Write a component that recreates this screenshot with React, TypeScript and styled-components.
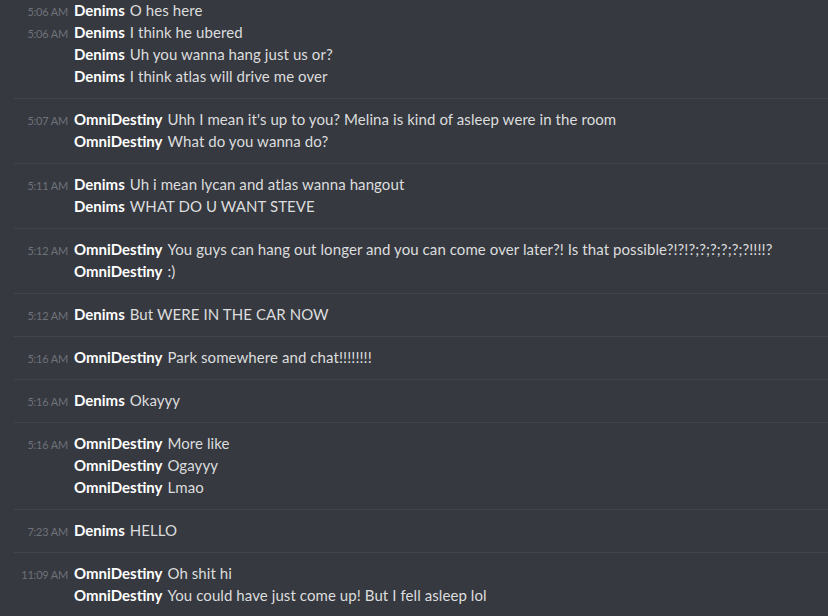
import React from "react";
import styled, { createGlobalStyle } from "styled-components";

const GlobalStyle = createGlobalStyle`
  html, body {
    margin: 0;
    padding: 0;
    background: #36393f;
    overflow: hidden;
  }
`;

type Line = { time?: string; author: string; text: string };

const groups: Line[][] = [
  [
    { time: "5:06 AM", author: "Denims", text: "O hes here" },
    { time: "5:06 AM", author: "Denims", text: "I think he ubered" },
    { author: "Denims", text: "Uh you wanna hang just us or?" },
    { author: "Denims", text: "I think atlas will drive me over" },
  ],
  [
    {
      time: "5:07 AM",
      author: "OmniDestiny",
      text: "Uhh I mean it's up to you? Melina is kind of asleep were in the room",
    },
    { author: "OmniDestiny", text: "What do you wanna do?" },
  ],
  [
    { time: "5:11 AM", author: "Denims", text: "Uh i mean lycan and atlas wanna hangout" },
    { author: "Denims", text: "WHAT DO U WANT STEVE" },
  ],
  [
    {
      time: "5:12 AM",
      author: "OmniDestiny",
      text: "You guys can hang out longer and you can come over later?! Is that possible?!?!?;?;?;?;?;?!!!!?",
    },
    { author: "OmniDestiny", text: ":)" },
  ],
  [{ time: "5:12 AM", author: "Denims", text: "But WERE IN THE CAR NOW" }],
  [{ time: "5:16 AM", author: "OmniDestiny", text: "Park somewhere and chat!!!!!!!!" }],
  [{ time: "5:16 AM", author: "Denims", text: "Okayyy" }],
  [
    { time: "5:16 AM", author: "OmniDestiny", text: "More like" },
    { author: "OmniDestiny", text: "Ogayyy" },
    { author: "OmniDestiny", text: "Lmao" },
  ],
  [{ time: "7:23 AM", author: "Denims", text: "HELLO" }],
  [
    { time: "11:09 AM", author: "OmniDestiny", text: "Oh shit hi" },
    { author: "OmniDestiny", text: "You could have just come up! But I fell asleep lol" },
  ],
];

export default function App() {
  return (
    <>
      <GlobalStyle />
      <Chat>
        {groups.map((group, gi) => (
          <Group key={gi}>
            {group.map((line, li) => (
              <Row key={li}>
                <Time>{line.time ?? ""}</Time>
                <Author>{line.author}</Author>
                <Text>{line.text}</Text>
              </Row>
            ))}
          </Group>
        ))}
      </Chat>
    </>
  );
}

const Chat = styled.div`
  display: flex;
  flex-direction: column;
  height: 616px;
  overflow: hidden;
  margin-top: -10px;
  padding-left: 14px;
  font-family: Lato, "Open Sans", sans-serif;
`;

const Group = styled.div`
  padding: 10px 0;
  border-bottom: 1px solid #42454c;
  flex-shrink: 0;
`;

const Row = styled.div`
  display: flex;
  align-items: baseline;
  height: 22px;
  line-height: 20px;
  white-space: nowrap;
`;

const Time = styled.span`
  width: 54px;
  flex-shrink: 0;
  text-align: right;
  margin-right: 6px;
  font-size: 11px;
  color: #6e727a;
  letter-spacing: -0.2px;
`;

const Author = styled.span`
  font-size: 15px;
  font-weight: 700;
  color: #ffffff;
  margin-right: 5px;
`;

const Text = styled.span`
  font-size: 15px;
  color: #dcddde;
  letter-spacing: 0.08px;
`;
